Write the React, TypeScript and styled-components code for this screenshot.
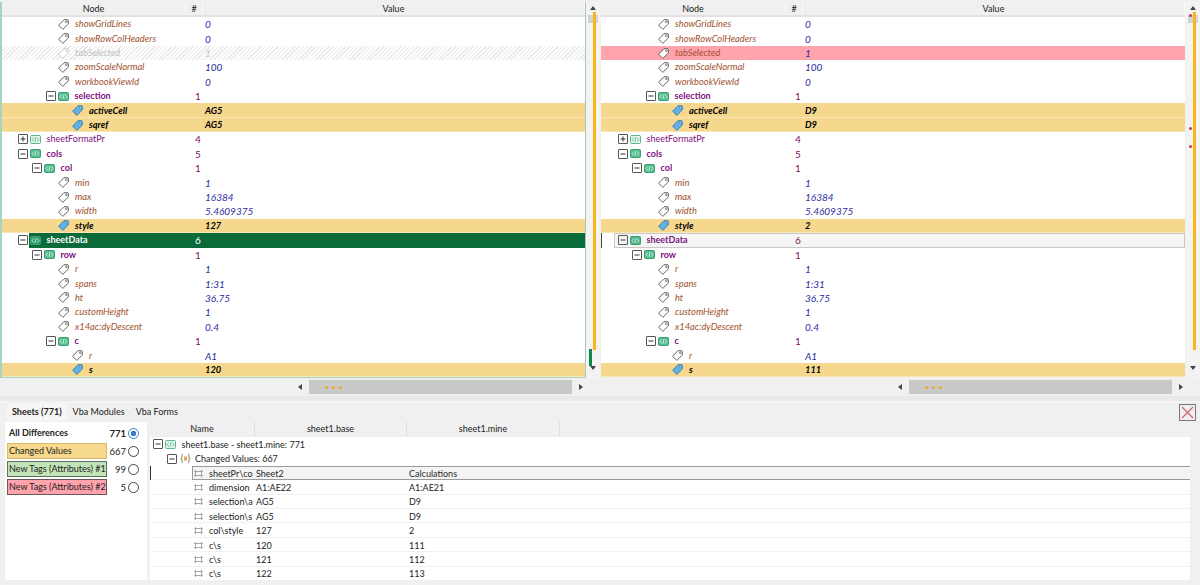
import React from 'react';
import styled, { createGlobalStyle, css } from 'styled-components';

const GlobalStyle = createGlobalStyle`
  html, body { margin: 0; padding: 0; background: #f0f0f0; }
  body { font-family: Lato, "Noto Sans", sans-serif; overflow: hidden; }
`;

type Kind = 'attr' | 'element';
type Mark = 'changed' | 'removed' | 'added' | 'selected' | 'focus';

interface NodeRow {
  kind: Kind;
  depth: number;
  name: string;
  count?: string;
  value?: string;
  open?: boolean;
  strong?: boolean;
  mark?: Mark;
}

const treeRows = (side: {
  tab: Mark;
  cell: string;
  style: string;
  s: string;
  data: Mark;
}): NodeRow[] => [
  { kind: 'attr', depth: 3, name: 'showGridLines', value: '0' },
  { kind: 'attr', depth: 3, name: 'showRowColHeaders', value: '0' },
  { kind: 'attr', depth: 3, name: 'tabSelected', value: '1', mark: side.tab },
  { kind: 'attr', depth: 3, name: 'zoomScaleNormal', value: '100' },
  { kind: 'attr', depth: 3, name: 'workbookViewId', value: '0' },
  { kind: 'element', depth: 3, name: 'selection', count: '1', open: true, strong: true },
  { kind: 'attr', depth: 4, name: 'activeCell', value: side.cell, mark: 'changed' },
  { kind: 'attr', depth: 4, name: 'sqref', value: side.cell, mark: 'changed' },
  { kind: 'element', depth: 1, name: 'sheetFormatPr', count: '4' },
  { kind: 'element', depth: 1, name: 'cols', count: '5', open: true, strong: true },
  { kind: 'element', depth: 2, name: 'col', count: '1', open: true, strong: true },
  { kind: 'attr', depth: 3, name: 'min', value: '1' },
  { kind: 'attr', depth: 3, name: 'max', value: '16384' },
  { kind: 'attr', depth: 3, name: 'width', value: '5.4609375' },
  { kind: 'attr', depth: 3, name: 'style', value: side.style, mark: 'changed' },
  { kind: 'element', depth: 1, name: 'sheetData', count: '6', open: true, strong: true, mark: side.data },
  { kind: 'element', depth: 2, name: 'row', count: '1', open: true, strong: true },
  { kind: 'attr', depth: 3, name: 'r', value: '1' },
  { kind: 'attr', depth: 3, name: 'spans', value: '1:31' },
  { kind: 'attr', depth: 3, name: 'ht', value: '36.75' },
  { kind: 'attr', depth: 3, name: 'customHeight', value: '1' },
  { kind: 'attr', depth: 3, name: 'x14ac:dyDescent', value: '0.4' },
  { kind: 'element', depth: 3, name: 'c', count: '1', open: true, strong: true },
  { kind: 'attr', depth: 4, name: 'r', value: 'A1' },
  { kind: 'attr', depth: 4, name: 's', value: side.s, mark: 'changed' },
];

const leftRows = treeRows({ tab: 'added', cell: 'AG5', style: '127', s: '120', data: 'selected' });
const rightRows = treeRows({ tab: 'removed', cell: 'D9', style: '2', s: '111', data: 'focus' });

const changes = [
  ['sheetPr\\co', 'Sheet2', 'Calculations'],
  ['dimension', 'A1:AE22', 'A1:AE21'],
  ['selection\\a', 'AG5', 'D9'],
  ['selection\\s', 'AG5', 'D9'],
  ['col\\style', '127', '2'],
  ['c\\s', '120', '111'],
  ['c\\s', '121', '112'],
  ['c\\s', '122', '113'],
];

const filters = [
  { label: 'Changed Values', count: '667', bg: '#f7d98d', line: '#d9b96c' },
  { label: 'New Tags (Attributes) #1', count: '99', bg: '#c3e3b8', line: '#5f6f5a' },
  { label: 'New Tags (Attributes) #2', count: '5', bg: '#ffa3ad', line: '#6b565a' },
];

const Page = styled.div`
  width: 1200px;
  height: 585px;
  background: #f0f0f0;
  display: flex;
  flex-direction: column;
  overflow: hidden;
`;

const Compare = styled.div`
  display: flex;
  padding-top: 2px;
`;

const Side = styled.section`
  width: 600px;
  display: flex;
  flex-direction: column;
`;

const SideTop = styled.div`
  display: flex;
  height: 376px;
`;

const Pane = styled.div<{ $active?: boolean }>`
  width: 586px;
  box-sizing: border-box;
  background: #fff;
  display: flex;
  flex-direction: column;
  overflow: hidden;
  border-left: ${(p) => (p.$active ? '2px solid #a3d5c4' : '1px solid #f0f0f0')};
  border-right: 1px solid ${(p) => (p.$active ? '#a3c9bb' : '#f0f0f0')};
  border-bottom: 1px solid ${(p) => (p.$active ? '#a3d5c4' : '#f0f0f0')};
`;

const HeaderRow = styled.div<{ $first: number }>`
  display: grid;
  grid-template-columns: ${(p) => p.$first}px 17px 1fr;
  height: 13px;
  flex: none;
  background: #f0f0f0;
  border-bottom: 2px solid #e2e2e2;
  font-size: 9px;
  line-height: 13px;
  color: #222;
  text-align: center;
`;

const HeaderCell = styled.div`
  border-right: 1px solid #fafafa;
`;

const markStyles = {
  changed: css`
    background: #f5d78e;
    box-shadow: inset 0 -1px 0 #fae6b4;
  `,
  removed: css`
    background: #ffa3ad;
  `,
  added: css`
    background: repeating-linear-gradient(135deg, #e9e9e9 0 1px, #fdfdfd 1px 3px);
  `,
  selected: css`
    background: linear-gradient(90deg, #fff 27px, #0b6a3a 27px);
    &::before {
      content: '';
      position: absolute;
      left: -1px;
      top: 0;
      bottom: 0;
      width: 1px;
      background: #333;
    }
  `,
  focus: css`
    &::before {
      content: '';
      position: absolute;
      left: 0;
      top: 0;
      bottom: 0;
      width: 1px;
      background: #444;
    }
    &::after {
      content: '';
      position: absolute;
      left: 13px;
      right: 0;
      top: 0;
      bottom: 0;
      border: 1px solid #c9c9c9;
      background: rgba(120, 120, 120, 0.07);
    }
  `,
};

const TreeRow = styled.div<{ $mark?: Mark; $first: number }>`
  position: relative;
  height: 14.42px;
  flex: none;
  display: grid;
  grid-template-columns: ${(p) => p.$first}px 19px 1fr;
  align-items: center;
  font-size: 9px;
  line-height: 14px;
  ${(p) => p.$mark && markStyles[p.$mark]}
`;

const NodeCell = styled.div<{ $indent: number }>`
  display: flex;
  align-items: center;
  padding-left: ${(p) => p.$indent}px;
  white-space: nowrap;
  min-width: 0;
`;

const Toggle = styled.svg`
  width: 10px;
  height: 10px;
  flex: none;
  margin-right: 2px;
`;

const ElementIcon = styled.svg`
  width: 11px;
  height: 9px;
  flex: none;
  margin-right: 5.5px;
`;

const TagIcon = styled.svg`
  width: 11px;
  height: 11px;
  flex: none;
  margin-right: 6px;
`;

const ElementName = styled.span<{ $strong?: boolean; $light?: boolean }>`
  color: ${(p) => (p.$light ? '#fff' : '#80107f')};
  font-weight: ${(p) => (p.$strong ? 700 : 400)};
`;

const AttrName = styled.span<{ $mark?: Mark }>`
  font-style: italic;
  color: ${(p) => (p.$mark === 'changed' ? '#000' : p.$mark === 'added' ? '#bdbdbd' : '#a0522d')};
  font-weight: ${(p) => (p.$mark === 'changed' ? 700 : 400)};
  font-size: 9.3px;
`;

const CountCell = styled.div<{ $light?: boolean }>`
  padding-left: 9px;
  color: ${(p) => (p.$light ? '#fff' : '#80105f')};
  font-size: 10px;
  position: relative;
  white-space: nowrap;
`;

const ValueCell = styled.div<{ $mark?: Mark }>`
  font-style: italic;
  color: ${(p) => (p.$mark === 'changed' ? '#000' : p.$mark === 'added' ? '#c4c4c4' : '#2b2ba0')};
  font-weight: ${(p) => (p.$mark === 'changed' ? 700 : 400)};
  font-size: ${(p) => (p.$mark === 'changed' ? 9.3 : 10)}px;
`;

const VScroll = styled.div`
  position: relative;
  width: 14px;
  flex: none;
  background: #f3f3f3;
`;

const ArrowUp = styled.div`
  position: absolute;
  left: 4px;
  top: 4px;
  border: 3.5px solid transparent;
  border-top: 0;
  border-bottom: 4px solid #444;
`;

const ArrowDown = styled.div`
  position: absolute;
  left: 4px;
  bottom: 8px;
  border: 3.5px solid transparent;
  border-bottom: 0;
  border-top: 4px solid #444;
`;

const ScrollThumb = styled.div`
  position: absolute;
  left: 2px;
  top: 13px;
  width: 10px;
  height: 8px;
  background: #cfd3da;
`;

const OverviewBar = styled.div<{ $left: number; $top: number; $h: number; $color: string }>`
  position: absolute;
  left: ${(p) => p.$left}px;
  top: ${(p) => p.$top}px;
  width: ${(p) => (p.$color === '#0b8a4d' ? 2.5 : 3)}px;
  height: ${(p) => p.$h}px;
  background: ${(p) => p.$color};
`;

const OverviewDot = styled.div<{ $top: number }>`
  position: absolute;
  left: 3px;
  top: ${(p) => p.$top}px;
  width: 3px;
  height: 3px;
  border-radius: 50%;
  background: #c23a4b;
`;

const HBar = styled.div`
  height: 14px;
  margin-top: 2px;
  display: flex;
  align-items: center;
  padding-left: 298px;
`;

const ArrowLeft = styled.div`
  border: 3.5px solid transparent;
  border-left: 0;
  border-right: 4px solid #444;
  margin-right: 7px;
`;

const ArrowRight = styled.div`
  border: 3.5px solid transparent;
  border-right: 0;
  border-left: 4px solid #444;
  margin-left: 7px;
`;

const HThumb = styled.div`
  width: 263px;
  height: 14px;
  background: #c8c8c8;
  display: flex;
  align-items: center;
  gap: 4px;
  padding-left: 16px;
  box-sizing: border-box;
`;

const Dot = styled.span`
  width: 3px;
  height: 3px;
  border-radius: 50%;
  background: #f5a623;
`;

const Splitter = styled.div`
  height: 5px;
  margin-top: 2px;
  background: #e9e9e9;
  border-bottom: 1px solid #f5f5f5;
`;

const TabBar = styled.div`
  height: 20px;
  display: flex;
  align-items: center;
  padding: 0 4px 0 6.5px;
  font-size: 9px;
`;

const Tab = styled.div<{ $on?: boolean }>`
  padding: 0 5.5px;
  font-weight: ${(p) => (p.$on ? 700 : 400)};
  color: #222;
  line-height: 18px;
  height: 18px;
  background: ${(p) => (p.$on ? '#f5f5f5' : 'transparent')};
`;

const CloseButton = styled.button`
  margin-left: auto;
  width: 17px;
  height: 17px;
  padding: 0;
  background: #efefef;
  border: 1px solid #777;
  display: flex;
  align-items: center;
  justify-content: center;
`;

const Bottom = styled.div`
  display: flex;
  gap: 3px;
  height: 158px;
  padding-left: 5px;
  font-size: 9px;
  color: #222;
`;

const FilterList = styled.aside`
  width: 142px;
  flex: none;
  background: #fff;
  padding: 2px 0 0 2px;
  box-sizing: border-box;
  display: flex;
  flex-direction: column;
`;

const FilterRow = styled.div`
  height: 18px;
  display: flex;
  align-items: center;
`;

const FilterLabel = styled.div<{ $bg?: string; $line?: string }>`
  width: 100px;
  height: 16px;
  box-sizing: border-box;
  line-height: 14px;
  padding-left: 1px;
  white-space: nowrap;
  overflow: hidden;
  background: ${(p) => p.$bg ?? 'transparent'};
  border: 1px solid ${(p) => p.$line ?? 'transparent'};
  font-weight: ${(p) => (p.$bg ? 400 : 700)};
`;

const FilterCount = styled.div<{ $bold?: boolean }>`
  width: 19px;
  text-align: right;
  font-size: 9.5px;
  font-weight: ${(p) => (p.$bold ? 700 : 400)};
`;

const Radio = styled.span<{ $on?: boolean }>`
  width: 11px;
  height: 11px;
  box-sizing: border-box;
  margin-left: 2px;
  border-radius: 50%;
  border: 1px solid ${(p) => (p.$on ? '#3a7fc4' : '#444')};
  background: ${(p) => (p.$on ? 'radial-gradient(circle, #3a7fc4 0 2.6px, #fff 3px)' : '#fff')};
`;

const Grid = styled.div`
  width: 1040px;
  flex: none;
  background: #fff;
  overflow: hidden;
`;

const GridHead = styled.div`
  display: grid;
  grid-template-columns: 105px 152px 153px 1fr;
  height: 15px;
  line-height: 14px;
  background: #f0f0f0;
  text-align: center;
`;

const GridHeadCell = styled.div`
  border-right: 1px solid #dedede;
  &:last-child {
    border-right: 0;
  }
`;

const GroupRow = styled.div<{ $indent: number }>`
  height: 14.42px;
  display: flex;
  align-items: center;
  padding-left: ${(p) => p.$indent}px;
  white-space: nowrap;
`;

const BraceIcon = styled.svg`
  width: 11px;
  height: 11px;
  flex: none;
  margin: 0 4px 0 1px;
`;

const ChangeRow = styled.div<{ $focus?: boolean }>`
  position: relative;
  height: 14.42px;
  display: grid;
  grid-template-columns: 105px 153px 1fr;
  align-items: center;
  white-space: nowrap;
  box-shadow: inset 0 -1px 0 #f1f1f1;
  ${(p) =>
    p.$focus &&
    css`
      &::before {
        content: '';
        position: absolute;
        left: 0;
        top: 0;
        bottom: 0;
        width: 1px;
        background: #333;
      }
      &::after {
        content: '';
        position: absolute;
        left: 42px;
        right: 0;
        top: 0;
        bottom: 0;
        border: 1px solid #9a9a9a;
        border-width: 1px 0 1px 1px;
        background: rgba(120, 120, 120, 0.08);
      }
    `}
`;

const ChangeName = styled.div`
  display: flex;
  align-items: center;
  padding-left: 44px;
`;

const ChangeValue = styled.div`
  padding-left: 1px;
`;

const RowIcon = styled.svg`
  width: 9px;
  height: 9px;
  flex: none;
  margin-right: 6px;
`;

const ExpandBox = ({ open }: { open: boolean }) => (
  <Toggle viewBox="0 0 10 10">
    <rect x="0.5" y="0.5" width="9" height="9" rx="0.5" fill="#fff" stroke="#555" />
    <path d={open ? 'M2.5 5h5' : 'M2.5 5h5M5 2.5v5'} stroke="#333" strokeWidth="1" />
  </Toggle>
);

const XmlIcon = ({ strong, selected }: { strong?: boolean; selected?: boolean }) => (
  <ElementIcon viewBox="0 0 11 9">
    <rect
      x="0.5"
      y="0.5"
      width="10"
      height="8"
      rx="1"
      fill={selected ? '#2f9e6c' : strong ? '#55bd8e' : '#e4f6ec'}
      stroke={strong || selected ? '#3a9f72' : '#58b98c'}
    />
    <path
      d="M3.800 2.500 2 4.500l1.800 2M7.200 2.500l1.800 2-1.800 2M6 2.300 5 6.700"
      fill="none"
      stroke={strong || selected ? '#fff' : '#3a9f72'}
      strokeWidth="0.7"
    />
  </ElementIcon>
);

const AttrIcon = ({ mark }: { mark?: Mark }) => {
  const changed = mark === 'changed';
  const faded = mark === 'added';
  const line = changed ? '#2f7fb8' : faded ? '#c4c4c4' : '#555';
  return (
    <TagIcon viewBox="0 0 11 11">
      <path
        d="M6 .7h3.600a.7.7 0 0 1 .7.7V5L4.800 10.400.6 6.200z"
        fill={changed ? '#63b0e4' : '#fff'}
        stroke={line}
        strokeWidth="0.9"
        strokeLinejoin="round"
      />
      <circle cx="8.300" cy="2.700" r="0.9" fill="#fff" stroke={line} strokeWidth="0.7" />
    </TagIcon>
  );
};

const Tree = ({ rows, active }: { rows: NodeRow[]; active?: boolean }) => {
  // the inactive pane has a 1px thinner edge, so its first column takes that pixel
  const offset = active ? 0 : 1;
  const first = 184 + offset;
  return (
    <Pane $active={active}>
      <HeaderRow $first={first}>
        <HeaderCell>Node</HeaderCell>
        <HeaderCell>#</HeaderCell>
        <HeaderCell>Value</HeaderCell>
      </HeaderRow>
      {rows.map((row, i) =>
        row.kind === 'element' ? (
          <TreeRow key={i} $mark={row.mark} $first={first}>
            <NodeCell $indent={2 + offset + 14 * row.depth}>
              <ExpandBox open={!!row.open} />
              <XmlIcon strong={row.strong} selected={row.mark === 'selected'} />
              <ElementName $strong={row.strong} $light={row.mark === 'selected'}>
                {row.name}
              </ElementName>
            </NodeCell>
            <CountCell $light={row.mark === 'selected'}>{row.count}</CountCell>
          </TreeRow>
        ) : (
          <TreeRow key={i} $mark={row.mark} $first={first}>
            <NodeCell $indent={14 + offset + 14 * row.depth}>
              <AttrIcon mark={row.mark} />
              <AttrName $mark={row.mark}>{row.name}</AttrName>
            </NodeCell>
            <span />
            <ValueCell $mark={row.mark}>{row.value}</ValueCell>
          </TreeRow>
        ),
      )}
    </Pane>
  );
};

const HorizontalBar = () => (
  <HBar>
    <ArrowLeft />
    <HThumb>
      <Dot />
      <Dot />
      <Dot />
    </HThumb>
    <ArrowRight />
  </HBar>
);

const App = () => (
  <Page>
    <GlobalStyle />
    <Compare>
      <Side>
        <SideTop>
          <Tree rows={leftRows} active />
          <VScroll>
            <ArrowUp />
            <ScrollThumb />
            <OverviewBar $left={7} $top={10} $h={338} $color="#fbb516" />
            <OverviewBar $left={3} $top={347} $h={17} $color="#0b8a4d" />
            <ArrowDown />
          </VScroll>
        </SideTop>
        <HorizontalBar />
      </Side>
      <Side>
        <SideTop>
          <Tree rows={rightRows} />
          <VScroll>
            <ArrowUp />
            <ScrollThumb />
            <OverviewBar $left={7} $top={10} $h={338} $color="#fbb516" />
            <OverviewDot $top={12} />
            <OverviewDot $top={125} />
            <OverviewDot $top={143} />
            <ArrowDown />
          </VScroll>
        </SideTop>
        <HorizontalBar />
      </Side>
    </Compare>
    <Splitter />
    <TabBar>
      <Tab $on>Sheets (771)</Tab>
      <Tab>Vba Modules</Tab>
      <Tab>Vba Forms</Tab>
      <CloseButton aria-label="Close">
        <svg width="13" height="13" viewBox="0 0 13 13">
          <path d="M1 1l11 11M12 1 1 12" stroke="#d0606a" strokeWidth="1.1" />
        </svg>
      </CloseButton>
    </TabBar>
    <Bottom>
      <FilterList>
        <FilterRow>
          <FilterLabel>All Differences</FilterLabel>
          <FilterCount $bold>771</FilterCount>
          <Radio $on />
        </FilterRow>
        {filters.map((f) => (
          <FilterRow key={f.label}>
            <FilterLabel $bg={f.bg} $line={f.line}>
              {f.label}
            </FilterLabel>
            <FilterCount>{f.count}</FilterCount>
            <Radio />
          </FilterRow>
        ))}
      </FilterList>
      <Grid>
        <GridHead>
          <GridHeadCell>Name</GridHeadCell>
          <GridHeadCell>sheet1.base</GridHeadCell>
          <GridHeadCell>sheet1.mine</GridHeadCell>
          <GridHeadCell />
        </GridHead>
        <GroupRow $indent={3}>
          <ExpandBox open />
          <XmlIcon />
          sheet1.base - sheet1.mine: 771
        </GroupRow>
        <GroupRow $indent={17}>
          <ExpandBox open />
          <BraceIcon viewBox="0 0 11 11">
            <path
              d="M3 1C1.800 1 2 2.500 2 4S1 5.500.8 5.500C1 5.500 2 5.500 2 7s-.2 3 1 3M8 1c1.200 0 1 1.500 1 3s1 1.500 1.200 1.500C10 5.500 9 5.500 9 7s.2 3-1 3"
              fill="none"
              stroke="#7a6a30"
              strokeWidth="0.8"
            />
            <rect x="4" y="3.500" width="3" height="4" fill="#e9a15b" />
          </BraceIcon>
          Changed Values: 667
        </GroupRow>
        {changes.map(([name, base, mine], i) => (
          <ChangeRow key={i} $focus={i === 0}>
            <ChangeName>
              <RowIcon viewBox="0 0 9 9">
                <path d="M0 2.500h9M0 6.500h9M1.500 1v7M7.500 1v7" stroke="#a9a9a9" strokeWidth="1" fill="none" />
              </RowIcon>
              {name}
            </ChangeName>
            <ChangeValue>{base}</ChangeValue>
            <ChangeValue>{mine}</ChangeValue>
          </ChangeRow>
        ))}
      </Grid>
    </Bottom>
  </Page>
);

export default App;
